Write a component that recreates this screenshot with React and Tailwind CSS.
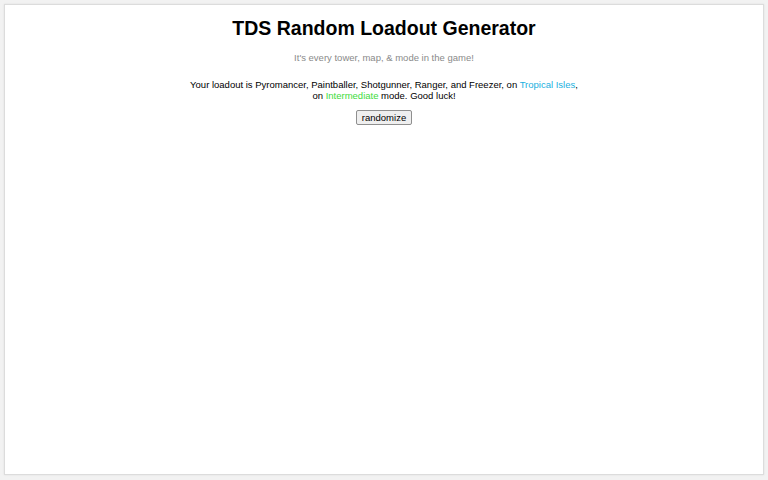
export default function App() {
  return (
    <div className="min-h-screen h-[480px] bg-[#f2f2f2] px-[4px] pt-[4px] pb-[5px] font-['Liberation_Sans',Arial,sans-serif]">
      <div className="h-full bg-white border border-[#dcdcdc] shadow-[0_0_2px_rgba(0,0,0,0.08)] flex flex-col items-center text-center">
        <h1 className="mt-[11px] text-[19.5px] leading-[24px] font-bold text-black">TDS Random Loadout Generator</h1>
        <p className="mt-[12px] text-[9.5px] leading-[12px] text-[#8a8a8a]">It's every tower, map, &amp; mode in the game!</p>
        <p className="mt-[15px] text-[9.5px] leading-[11px] text-black">
          Your loadout is Pyromancer, Paintballer, Shotgunner, Ranger, and Freezer, on{" "}
          <span className="text-[#1ab0e0]">Tropical Isles</span>,
          <br />
          on <span className="text-[#3ddc3d]">Intermediate</span> mode. Good luck!
        </p>
        <button className="mt-[9px] px-[5px] h-[15px] text-[9.5px] leading-[12px] text-black bg-[#efefef] border border-[#8f8f8f] rounded-[2px]">
          randomize
        </button>
      </div>
    </div>
  );
}
